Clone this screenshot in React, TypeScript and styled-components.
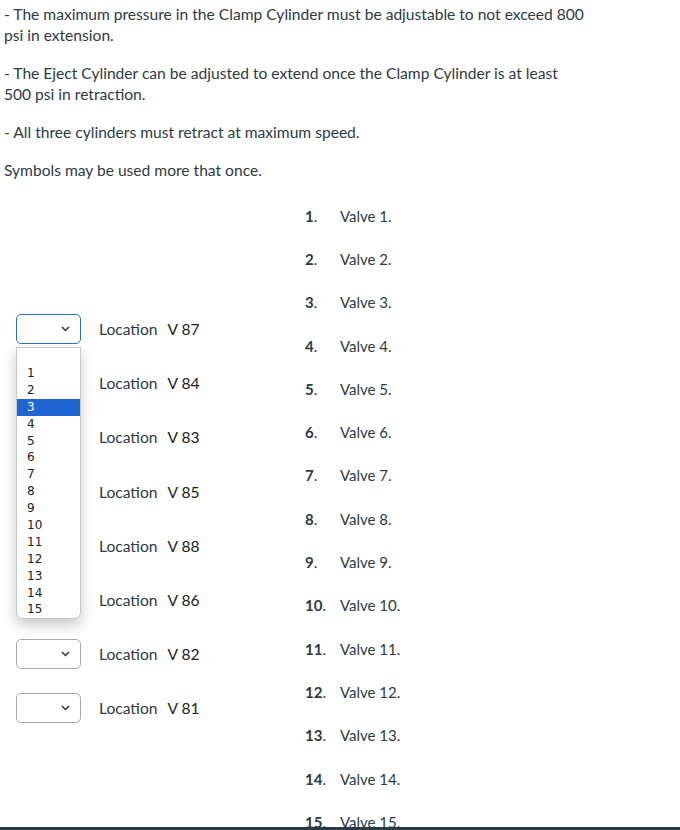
import React from "react";
import styled, { createGlobalStyle } from "styled-components";

const Global = createGlobalStyle`
  html, body { margin: 0; padding: 0; background: #fff; }
  body { font-family: Lato, "Open Sans", sans-serif; color: #2d3b45; }
`;

const Page = styled.div`
  padding: 4px 0 0 4px;
  width: 676px;
  display: flex;
  flex-direction: column;
  gap: 17px;
`;

const Para = styled.p`
  margin: 0;
  font-size: 15.6px;
  line-height: 21px;
  width: 584px;
`;

const Section = styled.div`
  display: grid;
  grid-template-columns: 301px 1fr;
  align-items: center;
  margin-top: -4px;
`;

const LeftCol = styled.div`
  position: relative;
  display: flex;
  flex-direction: column;
  gap: 24.2px;
  padding-left: 12px;
`;

const Row = styled.div`
  display: flex;
  align-items: center;
  height: 30px;
`;

const SelectBox = styled.div<{ $focused?: boolean }>`
  box-sizing: content-box;
  width: 53px;
  height: 28px;
  padding-right: 10px;
  border: 1px solid ${(p) => (p.$focused ? "#2a6fc9" : "#a9a9a9")};
  border-radius: 5px;
  display: flex;
  align-items: center;
  justify-content: flex-end;
  background: #fff;
`;

const Label = styled.span`
  margin-left: 18px;
  font-size: 15.6px;
  display: flex;
  gap: 10px;
`;

const Loc = styled.span`
  color: #2d3b45;
`;

const Code = styled.span`
  color: #222;
`;

const Menu = styled.div`
  position: absolute;
  left: 12px;
  top: 33px;
  width: 63px;
  background: #fff;
  border: 1px solid #c8c8c8;
  border-radius: 0 0 7px 7px;
  box-shadow: 0 6px 14px rgba(0, 0, 0, 0.22);
  z-index: 2;
  font-family: "DejaVu Sans", sans-serif;
  font-size: 12px;
  color: #222;
`;

const Option = styled.div<{ $active?: boolean }>`
  height: 16.9px;
  line-height: 17px;
  padding-left: 10px;
  background: ${(p) => (p.$active ? "#1f66d3" : "transparent")};
  color: ${(p) => (p.$active ? "#fff" : "#222")};
`;

const List = styled.ol`
  list-style: none;
  margin: 0;
  padding: 0;
`;

const Item = styled.li`
  height: 43.3px;
  display: flex;
  align-items: center;
  font-size: 15px;
`;

const Num = styled.span`
  width: 35px;
  flex: none;
  b { font-weight: 700; }
`;

const BottomBar = styled.div`
  position: fixed;
  left: 0;
  right: 0;
  bottom: 0;
  height: 3px;
  background: #2b3b46;
  z-index: 5;
`;

const Chevron = () => (
  <svg width="9" height="6" viewBox="0 0 9 6">
    <path d="M1 1l3.5 3.5L8 1" fill="none" stroke="#333" strokeWidth="1.5" />
  </svg>
);

const rows = ["87", "84", "83", "85", "88", "86", "82", "81"];

export default function App() {
  return (
    <>
      <Global />
      <Page>
        <Para>
          - The maximum pressure in the Clamp Cylinder must be adjustable to not exceed 800 psi in extension.
        </Para>
        <Para>
          - The Eject Cylinder can be adjusted to extend once the Clamp Cylinder is at least 500 psi in retraction.
        </Para>
        <Para>- All three cylinders must retract at maximum speed.</Para>
        <Para>Symbols may be used more that once.</Para>
        <Section>
          <LeftCol>
            {rows.map((r, i) => (
              <Row key={r}>
                <SelectBox $focused={i === 0}>
                  <Chevron />
                </SelectBox>
                <Label>
                  <Loc>Location</Loc>
                  <Code>V {r}</Code>
                </Label>
              </Row>
            ))}
            <Menu>
              <Option>&nbsp;</Option>
              {Array.from({ length: 15 }, (_, i) => (
                <Option key={i} $active={i === 2}>
                  {i + 1}
                </Option>
              ))}
            </Menu>
          </LeftCol>
          <List>
            {Array.from({ length: 15 }, (_, i) => (
              <Item key={i}>
                <Num>
                  <b>{i + 1}</b>.
                </Num>
                Valve {i + 1}.
              </Item>
            ))}
          </List>
        </Section>
      </Page>
      <BottomBar />
    </>
  );
}
